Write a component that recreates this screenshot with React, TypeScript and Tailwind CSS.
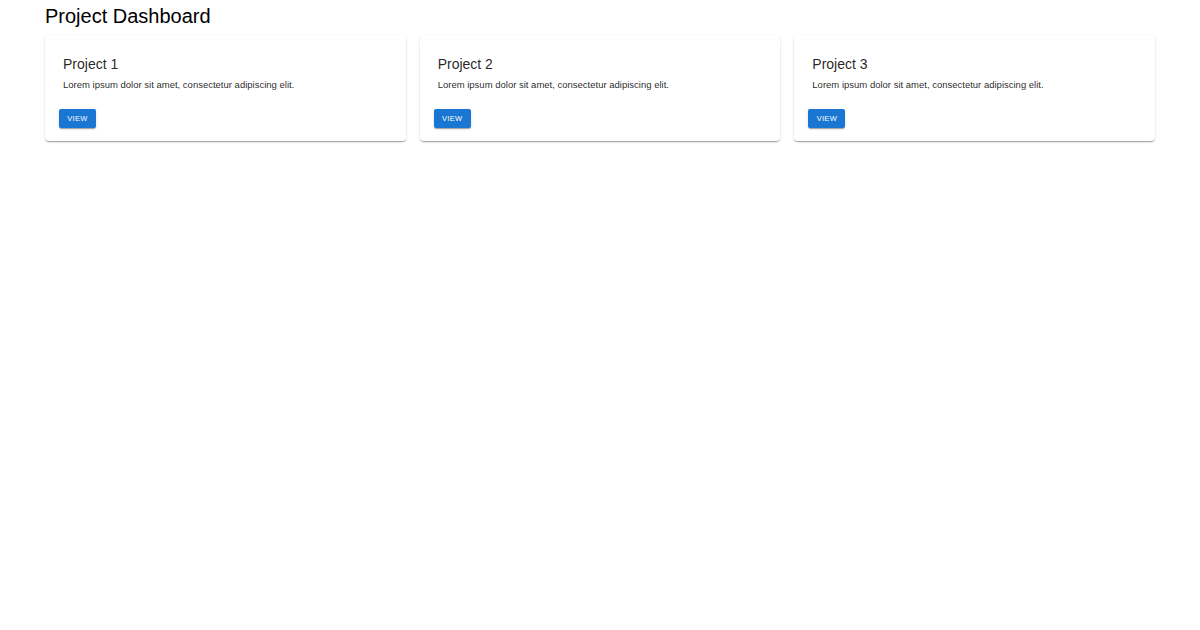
import React from "react";

const projects = ["Project 1", "Project 2", "Project 3"];

export default function App() {
  return (
    <div
      className="min-h-[630px] w-[1200px] bg-white px-[45px]"
      style={{ fontFamily: '"Liberation Sans", Arial, sans-serif' }}
    >
      <h1 className="pt-[1px] text-[20px] leading-[30px] text-black">Project Dashboard</h1>
      <div className="mt-[4px] grid grid-cols-3 gap-[14px]">
        {projects.map((p) => (
          <div
            key={p}
            className="rounded-[4px] bg-white shadow-[0_2px_1px_-1px_rgba(0,0,0,0.2),0_1px_1px_0_rgba(0,0,0,0.14),0_1px_3px_0_rgba(0,0,0,0.12)]"
          >
            <div className="px-[18px] pt-[19px]">
              <div className="text-[14px] leading-[20px] text-[rgba(0,0,0,0.87)]">{p}</div>
              <div className="mt-[4px] text-[9.5px] leading-[14px] text-[rgba(0,0,0,0.87)]">
                Lorem ipsum dolor sit amet, consectetur adipiscing elit.
              </div>
            </div>
            <div className="px-[14px] pt-[17px] pb-[13px]">
              <button className="flex h-[19px] w-[37px] items-center justify-center rounded-[2px] bg-[#1976d2] text-[7.5px] font-normal uppercase tracking-[0.3px] text-white shadow-[0_2px_1px_-1px_rgba(0,0,0,0.2),0_1px_1px_0_rgba(0,0,0,0.14),0_1px_3px_0_rgba(0,0,0,0.12)]">
                View
              </button>
            </div>
          </div>
        ))}
      </div>
    </div>
  );
}
